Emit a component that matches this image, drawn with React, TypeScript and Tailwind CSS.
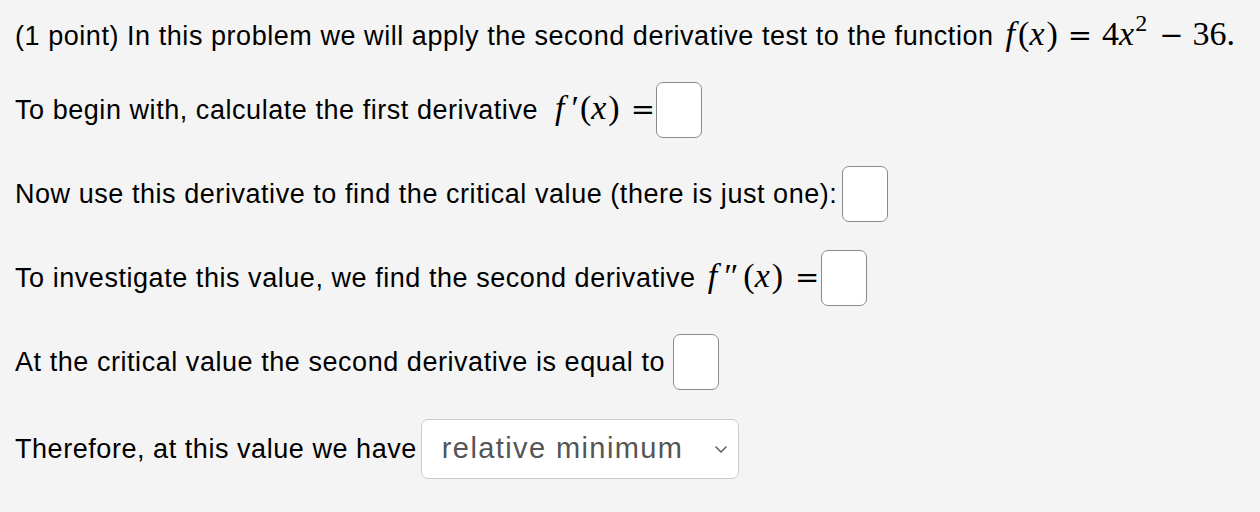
import React from 'react';

const Box: React.FC<{ className?: string }> = ({ className }) => (
  <span className={`inline-block w-[46px] h-[56px] bg-white border-[1.5px] border-[#8a8a8a] rounded-[7px] shrink-0 ${className ?? ''}`} />
);

const M: React.FC<{ children: React.ReactNode; className?: string }> = ({ children, className }) => (
  <span className={`font-['Liberation_Serif','Times_New_Roman',serif] text-[34px] leading-none tracking-normal whitespace-nowrap ${className ?? ''}`}>
    {children}
  </span>
);

// wide operator glyphs, closer to the math renderer's
const Op: React.FC<{ children: React.ReactNode; className?: string }> = ({ children, className }) => (
  <span className={`font-['DejaVu_Sans',sans-serif] text-[29px] ${className ?? ''}`}>{children}</span>
);

const App: React.FC = () => {
  return (
    <div className="w-[1260px] h-[512px] bg-[#f4f4f4] text-black font-['Liberation_Sans',Arial,sans-serif] text-[27px] tracking-[0.55px] pl-[15px] pt-[17px] flex flex-col">
      {/* statement */}
      <p className="h-[30px] leading-[30px] whitespace-nowrap">
        (1 point) In this problem we will apply the second derivative test to the function
        <M className="ml-[12px]">
          <i>f</i>
          <span className="ml-[3px]">(</span>
          <i>x</i>
          <span className="ml-[2px]">)</span>
          <Op className="ml-[10px]">=</Op>
          <span className="ml-[10px]">4</span>
          <i>x</i>
          <sup className="text-[24px] relative -top-[14px] align-baseline ml-[1px]">2</sup>
          <Op className="ml-[12px]">−</Op>
          <span className="ml-[9px]">36.</span>
        </M>
      </p>

      {/* first derivative */}
      <div className="mt-[35px] flex items-center whitespace-nowrap">
        <span>
          To begin with, calculate the first derivative
          <M className="ml-[17px]">
            <i>f</i>
            <span className="ml-[7px]">′</span>
            <span className="ml-[1px]">(</span>
            <i>x</i>
            <span className="ml-[2px]">)</span>
            <Op className="ml-[11px]">=</Op>
          </M>
        </span>
        <Box className="ml-[1px]" />
      </div>

      {/* critical value */}
      <div className="mt-[28px] flex items-center whitespace-nowrap">
        <span>Now use this derivative to find the critical value (there is just one):</span>
        <Box className="ml-[5px]" />
      </div>

      {/* second derivative */}
      <div className="mt-[28px] flex items-center whitespace-nowrap">
        <span>
          To investigate this value, we find the second derivative
          <M className="ml-[12px]">
            <i>f</i>
            <span className="ml-[7px]">″</span>
            <span className="ml-[5px]">(</span>
            <i>x</i>
            <span className="ml-[2px]">)</span>
            <Op className="ml-[12px]">=</Op>
          </M>
        </span>
        <Box className="ml-[2px]" />
      </div>

      {/* value at critical point */}
      <div className="mt-[28px] flex items-center whitespace-nowrap">
        <span>At the critical value the second derivative is equal to</span>
        <Box className="ml-[8px]" />
      </div>

      {/* conclusion */}
      <div className="mt-[29px] flex items-center whitespace-nowrap">
        <span>Therefore, at this value we have</span>
        <div className="ml-[4px] w-[318px] h-[60px] bg-white border-[1.5px] border-[#cccccc] rounded-[7px] flex items-center justify-between pl-[20px] pr-[10px]">
          <span className="text-[29px] tracking-[1.4px] text-[#555555]">relative minimum</span>
          <svg width="14" height="9" viewBox="0 0 14 9">
            <polyline points="1.5,1.5 7,7 12.5,1.5" fill="none" stroke="#555" strokeWidth="1.4" />
          </svg>
        </div>
      </div>
    </div>
  );
};

export default App;
